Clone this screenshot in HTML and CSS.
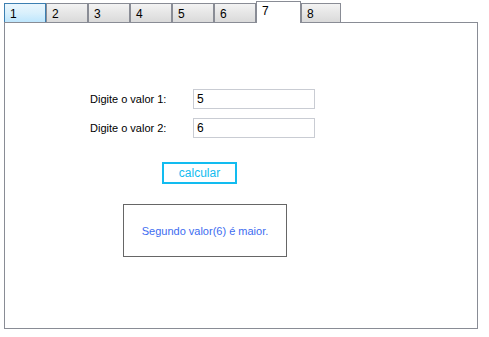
FILE: index.html
```html
<!DOCTYPE html>
<html lang="pt">
<head>
    <meta charset="UTF-8">
    <title>Exercícios</title>
    <link rel="stylesheet" href="styles.css">
</head>
<body>
    <div class="tabs">
        <div class="tab hover">1</div>
        <div class="tab">2</div>
        <div class="tab">3</div>
        <div class="tab">4</div>
        <div class="tab">5</div>
        <div class="tab">6</div>
        <div class="tab active">7</div>
        <div class="tab last">8</div>
    </div>
    <div class="panel">
        <div class="form-row">
            <label for="valor1">Digite o valor 1:</label>
            <input type="text" id="valor1" value="5">
        </div>
        <div class="form-row">
            <label for="valor2">Digite o valor 2:</label>
            <input type="text" id="valor2" value="6">
        </div>
        <button type="button" class="calc-btn">calcular</button>
        <div class="result">Segundo valor(6) é maior.</div>
    </div>
</body>
</html>
```

FILE: styles.css
```css
* {
    box-sizing: border-box;
    font-family: 'Liberation Sans', Arial, sans-serif;
}

body {
    margin: 0;
    background-color: #fff;
    font-size: 11px;
    color: #000;
}

.tabs {
    display: flex;
    align-items: flex-end;
    height: 22px;
    padding-left: 4px;
}

.tab {
    width: 42px;
    height: 19px;
    border: 1px solid #898c95;
    border-bottom: none;
    padding: 3px 0 0 5px;
    font-size: 12px;
    background: linear-gradient(#f3f3f3, #e6e6e6 50%, #dadada);
}

.tab.hover {
    border-color: #3c7fb1;
    background: linear-gradient(#eaf6fd, #d9f0fc 50%, #bee6fd);
}

.tab.active {
    width: 45px;
    height: 22px;
    margin-bottom: -1px;
    padding-top: 2px;
    position: relative;
    z-index: 1;
    background: #fff;
}

.tab.last {
    width: 40px;
}

.panel {
    margin-left: 4px;
    width: 474px;
    height: 307px;
    border: 1px solid #898c95;
    padding-top: 66px;
}

.form-row {
    display: flex;
    align-items: center;
    margin-left: 85px;
    margin-bottom: 9px;
}

.form-row label {
    width: 103px;
    font-size: 11px;
}

.form-row input {
    width: 122px;
    height: 20px;
    border: 1px solid #c9ccd3;
    padding: 0 3px;
    font-size: 12px;
    outline: none;
}

.calc-btn {
    display: block;
    margin: 24px 0 0 157px;
    width: 75px;
    height: 22px;
    border: 2px solid #12bcf0;
    background: #fff;
    color: #12bcf0;
    font-size: 12px;
    padding: 0;
}

.result {
    margin: 20px 0 0 118px;
    width: 164px;
    height: 53px;
    border: 1px solid #666;
    display: flex;
    align-items: center;
    justify-content: center;
    color: #3d6cf0;
    font-size: 11px;
}
```
